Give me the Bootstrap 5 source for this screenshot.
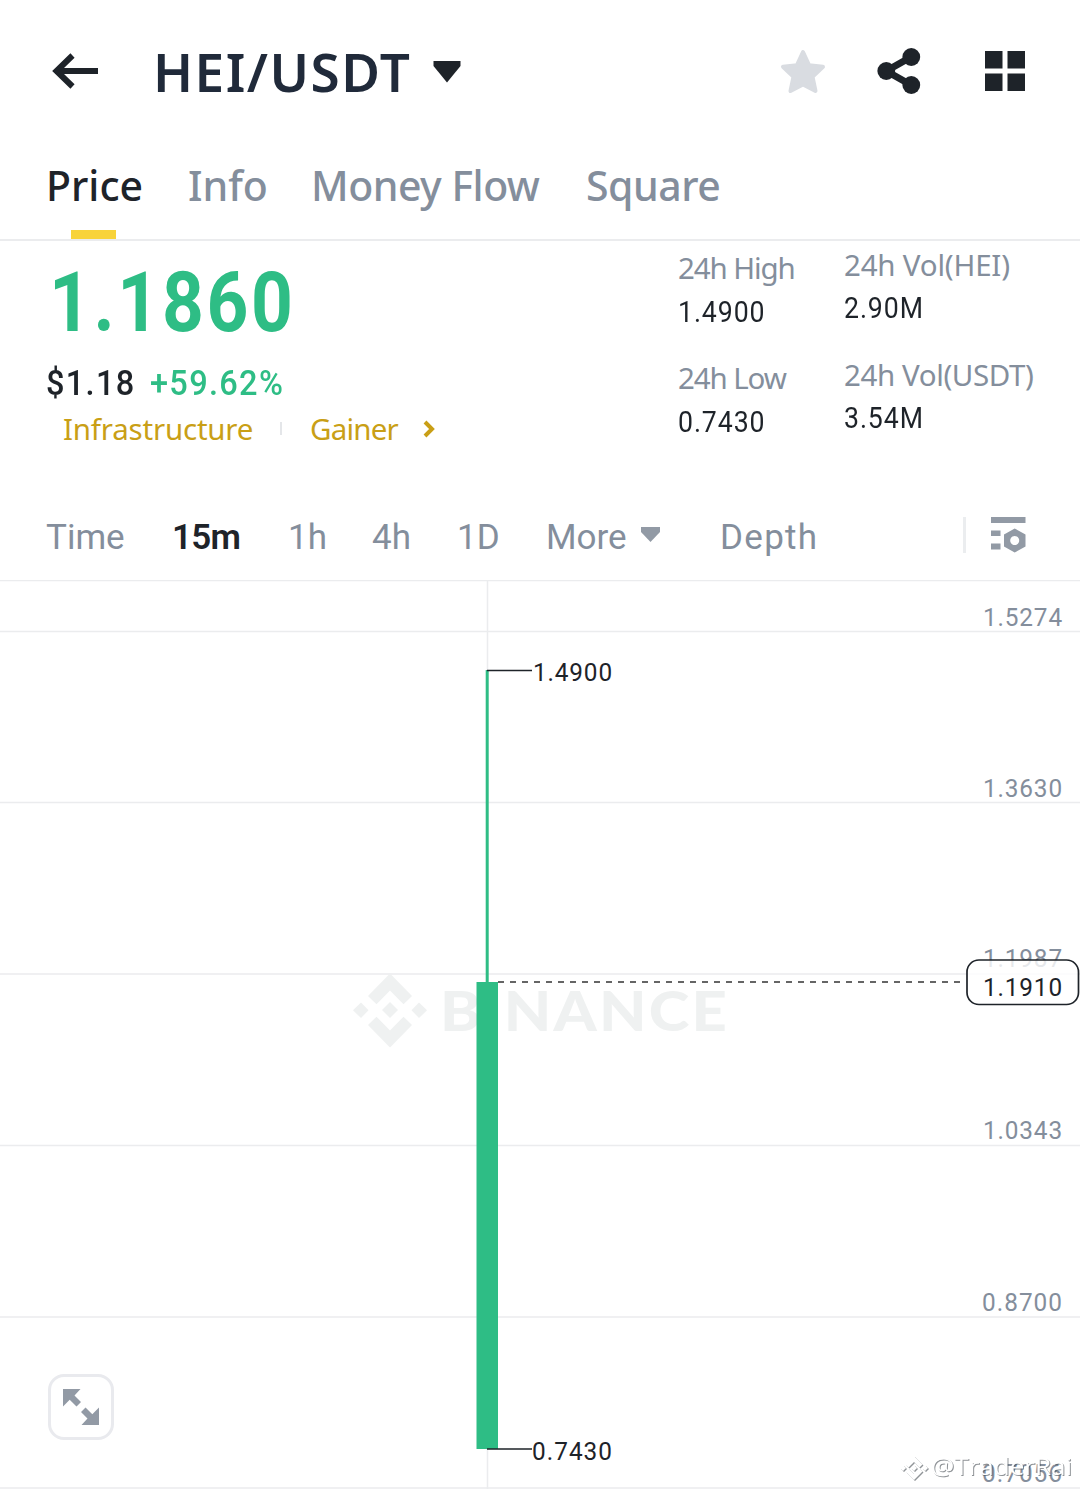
<!DOCTYPE html>
<html lang="en">
<head>
<meta charset="utf-8">
<meta name="viewport" content="width=device-width, initial-scale=1">
<title>HEI/USDT</title>
<link href="https://cdn.jsdelivr.net/npm/bootstrap@5.3.0/dist/css/bootstrap.min.css" rel="stylesheet">
<style>
  :root { --ink:#1e2329; --muted:#848e9c; --up:#2ebd85; --gold:#c99f16; --rule:#ebecee; }
  body { width:1080px; height:1489px; overflow:hidden; background:#fff; color:var(--ink); font-family:"Noto Sans",sans-serif; white-space:nowrap; }
  svg { display:block; flex:none; }
  .num { font-family:Roboto,sans-serif; }
  .ink-up { color:var(--up); }

  .topbar { height:142px; padding:0 55px 0 52px; }
  .pair { font-size:53px; font-weight:600; line-height:1; letter-spacing:1.5px; margin-left:55px; padding-top:1px; color:#202a3a; width:280px; }
  .caret { margin-top:2px; }
  .gap-share { margin-left:51px; }
  .gap-grid { margin-left:64px; }

  .tabs { display:grid; grid-template-columns:142px 123px 275px auto; height:99px; padding:2px 0 0 46px; border-bottom:2px solid var(--rule); font-size:41px; font-weight:500; line-height:82px; color:var(--muted); }
  .tabs .active { position:relative; color:var(--ink); }
  .tabs .active::after { content:""; position:absolute; left:25px; top:86px; width:45px; height:9px; background:#f8d33a; }
  .tight { letter-spacing:-.5px; }

  .quote { height:253px; }
  .quote-main { width:678px; padding-top:18px; }
  .last { font-size:83px; font-weight:700; line-height:88px; letter-spacing:3px; margin-left:48.5px; transform:scaleX(.88); transform-origin:left; }
  .delta { margin:14px 0 0 46px; font-size:35px; line-height:46px; font-weight:500; }
  .delta span { display:block; transform:scaleX(.93); transform-origin:left; letter-spacing:1.4px; }
  .delta .usd { width:103.5px; }
  .tags { margin-left:63px; font-size:29.5px; line-height:43px; color:var(--gold); }
  .tags .t1 { width:217px; letter-spacing:-.2px; }
  .tags .bar { width:2px; height:13px; background:#e4e6e9; }
  .tags .t2 { width:113px; margin-left:28px; letter-spacing:-.8px; }
  .stats { width:166px; font-size:29.5px; line-height:44px; padding-top:5px; }
  .stats.vol { width:236px; padding-top:2px; }
  .stats .lbl { color:var(--muted); letter-spacing:-1.1px; }
  .stats.vol .lbl { letter-spacing:-.2px; line-height:43px; }
  .stats.vol .lbl.tight { letter-spacing:-.4px; padding-top:1px; }
  .stats .num { font-size:29px; margin-bottom:22px; letter-spacing:1px; transform:scaleX(.92); transform-origin:left; }

  .frames { height:86px; padding:0 0 0 46px; font-size:35px; line-height:84px; color:var(--muted); display:grid; grid-template-columns:126px 116px 84px 85px 89px 95px 79px 243px 27px auto; align-items:center; }
  .frames span { padding-top:2px; }
  .frames .on { color:var(--ink); font-weight:600; letter-spacing:-.8px; }
  .frames .wide { letter-spacing:1.3px; }
  .frames .split { width:3px; height:36px; margin-bottom:5px; background:#ebedef; }
  .frames .tool { margin-bottom:4px; }

  .chart { height:909px; }
  .chart text { font-family:Roboto,sans-serif; font-size:26.5px; }
  .chart .brand { font-family:Lato,sans-serif; font-size:56px; font-weight:900; letter-spacing:2px; }
  .chart .author { font-family:"Open Sans",sans-serif; font-size:24.5px; }
  .stamp { filter:drop-shadow(1px 1px .4px rgba(70,76,84,.6)); }
  .expand { left:48px; top:794px; width:66px; height:66px; border:3px solid #e9eaee; border-radius:16px; background:#fff; padding:0; }
</style>
<script src="https://cdn.jsdelivr.net/npm/bootstrap@5.3.0/dist/js/bootstrap.bundle.min.js"></script>
</head>
<body>
<header class="topbar d-flex align-items-center">
  <svg width="46" height="36" viewBox="0 0 46 36"><path d="M46 18H5M20.500 2.500L4.500 18l16 15.500" fill="none" stroke="#1e2329" stroke-width="6"/></svg>
  <div class="pair">HEI/USDT</div>
  <svg class="caret" width="28" height="22" viewBox="0 0 28 22"><path d="M.5 0H27.500V5L14 21.500.5 5Z" fill="#1e2329"/></svg>
  <div class="d-flex align-items-center ms-auto">
    <svg width="46" height="46" viewBox="0 0 46 46"><path d="M23 4l6 13.200 14 1.500-10.500 10 3 14.300L23 36.500 10.500 43l3-14.300L3 18.700l14-1.500Z" fill="#d9dce1" stroke="#d9dce1" stroke-width="4" stroke-linejoin="round"/></svg>
    <svg class="gap-share" width="44" height="46" viewBox="0 0 44 46"><g fill="#1e2329"><circle cx="9.300" cy="23" r="8.900"/><circle cx="34.300" cy="9" r="8.900"/><circle cx="34.300" cy="37" r="8.900"/></g><path d="M34 9L9.300 23 34 37" fill="none" stroke="#1e2329" stroke-width="7"/></svg>
    <svg class="gap-grid" width="40" height="40" viewBox="0 0 40 40"><path d="M0 0h17.500v17.500H0zM22.500 0H40v17.500H22.500zM0 22.500h17.500V40H0zM22.500 22.500H40V40H22.500z" fill="#1e2329"/></svg>
  </div>
</header>

<nav class="tabs">
  <span class="active">Price</span><span>Info</span><span class="tight">Money Flow</span><span class="tight">Square</span>
</nav>

<section class="quote d-flex">
  <div class="quote-main">
    <div class="last num ink-up">1.1860</div>
    <div class="delta num d-flex"><span class="usd">$1.18</span><span class="ink-up">+59.62%</span></div>
    <div class="tags d-flex align-items-center">
      <span class="t1">Infrastructure</span><span class="bar"></span><span class="t2">Gainer</span>
      <svg width="12" height="18" viewBox="0 0 12 18"><path d="M2 2L9 9 2 16" fill="none" stroke="#c99f16" stroke-width="4"/></svg>
    </div>
  </div>
  <div class="stats">
    <div class="lbl">24h High</div><div class="num">1.4900</div>
    <div class="lbl">24h Low</div><div class="num">0.7430</div>
  </div>
  <div class="stats vol">
    <div class="lbl">24h Vol(HEI)</div><div class="num">2.90M</div>
    <div class="lbl tight">24h Vol(USDT)</div><div class="num">3.54M</div>
  </div>
</section>

<nav class="frames num">
  <span>Time</span><span class="on">15m</span><span>1h</span><span>4h</span><span>1D</span><span>More</span>
  <svg width="19" height="20" viewBox="0 0 19 20"><path d="M0 0H19V5L9.500 15 0 5Z" fill="#929aa5"/></svg>
  <span class="wide">Depth</span><span class="split"></span>
  <svg class="tool" width="36" height="40" viewBox="0 0 36 40"><path fill="#929aa5" fill-rule="evenodd" d="M1 2H35.500V8H1zM1 15.500H10.500V21H1zM1 28.500H10.500V34.500H1zM24.700 13.500L35.500 19.500V31.500L24.700 37.500 14 31.500V19.500ZM24.700 21a4.500 4.500 0 1 0 .01 0Z"/></svg>
</nav>

<main class="chart position-relative">
  <svg width="1080" height="909" viewBox="0 580 1080 909">
    <path d="M0 580.500H1080M0 631.500H1080M0 802.500H1080M0 974H1080M0 1145.500H1080M0 1317H1080M0 1488H1080M487.500 580V1489" stroke="#ebecee" stroke-width="1.500"/>
    <g fill="#eff1f1">
      <path d="M390 973.500l22 22.500-8.500 8.300L390 990.500l-13.500 13.800L368 996zM390 1047.500l22-22.500-8.500-8.300L390 1030.500l-13.500-13.800L368 1025zM390 1002l8 8-8 8-8-8zM361 1002.500l7.500 7.800-7.500 7.700-8-7.700zM419 1002.500l8 7.800-8 7.700-7.500-7.700z"/>
      <text class="brand" x="440" y="1030.500" textLength="289" lengthAdjust="spacingAndGlyphs">BINANCE</text>
    </g>
    <g fill="#848e9c">
      <text transform="translate(983 625.500) scale(.92 1)" textLength="86">1.5274</text>
      <text transform="translate(983 796.500) scale(.92 1)" textLength="86">1.3630</text>
      <text transform="translate(983 967) scale(.92 1)" textLength="86">1.1987</text>
      <text transform="translate(983 1138.500) scale(.92 1)" textLength="86">1.0343</text>
      <text transform="translate(982 1310.500) scale(.92 1)" textLength="87">0.8700</text>
      <text transform="translate(982 1481.500) scale(.92 1)" textLength="87">0.7056</text>
    </g>
    <path d="M487.200 670V983" stroke="#2ebd85" stroke-width="3"/>
    <path d="M476.500 982H498V1449H476.500Z" fill="#2ebd85"/>
    <path d="M487 670.500H532M487 1449H532" stroke="#1e2329" stroke-width="1.600"/>
    <path d="M498 982H966" stroke="#333" stroke-width="1.700" stroke-dasharray="6 6"/>
    <rect x="967" y="960" width="111.500" height="44.500" rx="12" fill="#fff" fill-opacity=".8" stroke="#1e2329" stroke-width="1.700"/>
    <g fill="#1e2329">
      <text transform="translate(983 995.500) scale(.92 1)" textLength="86">1.1910</text>
      <text transform="translate(533 680.500) scale(.92 1)" textLength="86">1.4900</text>
      <text transform="translate(532 1459.500) scale(.92 1)" textLength="87">0.7430</text>
    </g>
    <g class="stamp" fill="#fff">
      <path d="M914 1456l8.500 8.500-3 3-5.500-5.500-5.500 5.500-3-3zM914 1480l8.500-8.500-3-3-5.500 5.500-5.500-5.500-3 3zM914 1465l3 3-3 3-3-3zM903 1465l3 3-3 3-3-3zM925 1465l3 3-3 3-3-3z"/>
      <text class="author" x="931" y="1475" textLength="141" lengthAdjust="spacingAndGlyphs">@TraderRai</text>
    </g>
  </svg>
  <button class="expand position-absolute d-flex align-items-center justify-content-center" type="button" aria-label="Expand">
    <svg width="36" height="36" viewBox="0 0 36 36"><path d="M0 0H17.500L11.500 6.500 18 13 13.500 17.500 6.700 10.800 0 17.500ZM36 36H18.500L24.500 29.500 18 23 22.500 18.500 29.300 25.200 36 18.500Z" fill="#929aa5"/></svg>
  </button>
</main>
</body>
</html>
